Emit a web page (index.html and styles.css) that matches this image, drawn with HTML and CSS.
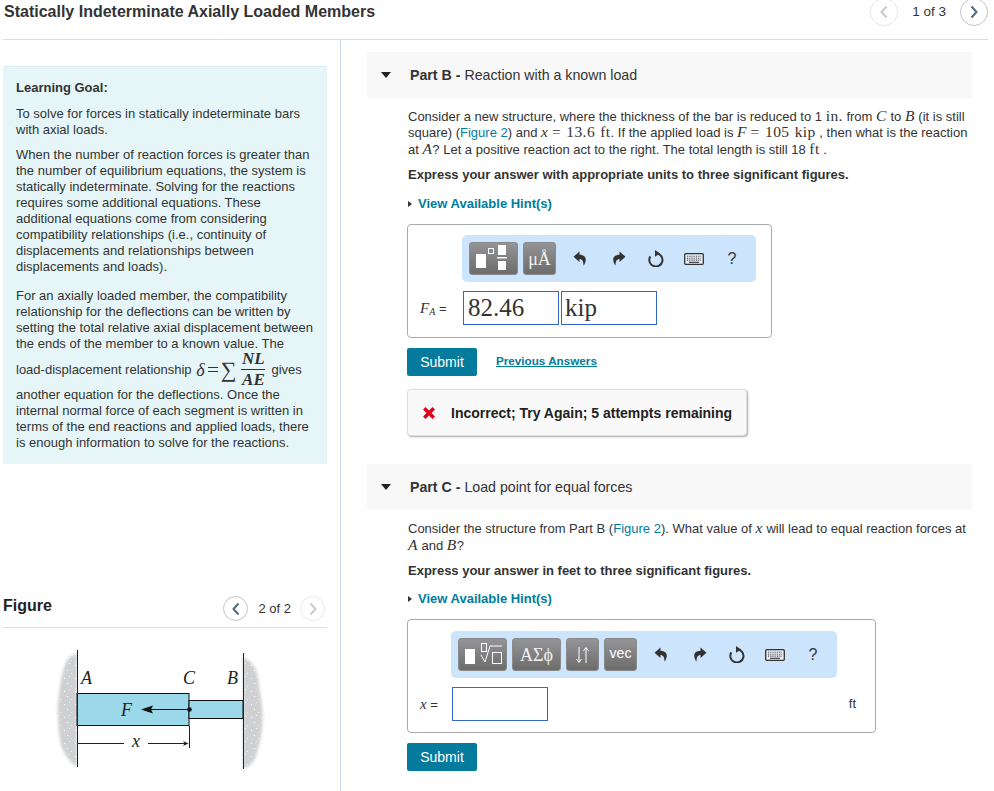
FILE: index.html
```html
<!DOCTYPE html>
<html lang="en">
<head>
<meta charset="utf-8">
<title>Statically Indeterminate Axially Loaded Members</title>
<link rel="stylesheet" href="styles.css">
</head>
<body>
<svg class="defs" width="0" height="0" aria-hidden="true">
  <symbol id="undo" viewBox="0 0 14 15"><path d="M6.500 0.500 L0.500 5.800 L6.500 11 V8 C9 8 10.500 10 10.600 14.800 C13.800 10 14.200 4 6.500 3.800 Z"/></symbol>
  <symbol id="redo" viewBox="0 0 14 15"><path d="M7.500 0.500 L13.500 5.800 L7.500 11 V8 C5 8 3.500 10 3.400 14.800 C0.200 10 -0.200 4 7.500 3.800 Z"/></symbol>
  <symbol id="reset" viewBox="0 0 16 17"><path d="M8 3.300 A6.600 6.600 0 1 1 2.300 6.400" fill="none" stroke="currentColor" stroke-width="2"/><path d="M7 0 L12 3.400 L7 6.800 Z"/></symbol>
  <symbol id="kbd" viewBox="0 0 20 12"><rect x="0.700" y="0.700" width="18.600" height="10.600" rx="1" fill="#e6edf5" stroke="#333" stroke-width="1.300"/><path d="M3 3.300 H17 M3 5.200 H17 M3 7.100 H17" stroke="#555" stroke-width="1.100" stroke-dasharray="1 .8"/><path d="M5 9.300 H15" stroke="#333" stroke-width="1.100"/></symbol>
</svg>

<header class="top">
  <h1 class="title">Statically Indeterminate Axially Loaded Members</h1>
  <nav class="pager">
    <span class="circle off"><svg class="chev" viewBox="0 0 10 14"><path d="M7.500 1.500 L2.500 7 L7.500 12.500"/></svg></span>
    <span class="pager-text">1 of 3</span>
    <span class="circle"><svg class="chev" viewBox="0 0 10 14"><path d="M2.500 1.500 L7.500 7 L2.500 12.500"/></svg></span>
  </nav>
</header>

<div class="columns">
  <aside class="left">
    <section class="goal">
      <p class="goal-title">Learning Goal:</p>
      <p class="g1">To solve for forces in statically indeterminate bars<br>with axial loads.</p>
      <p class="g2">When the number of reaction forces is greater than<br>the number of equilibrium equations, the system is<br>statically indeterminate. Solving for the reactions<br>requires some additional equations. These<br>additional equations come from considering<br>compatibility relationships (i.e., continuity of<br>displacements and relationships between<br>displacements and loads).</p>
      <p class="g3">For an axially loaded member, the compatibility<br>relationship for the deflections can be written by<br>setting the total relative axial displacement between<br>the ends of the member to a known value. The</p>
      <div class="eqline">load-displacement relationship <span class="eq"><i>δ</i><span class="eq-eq">=</span><span class="eq-sum">∑</span></span><span class="frac"><i>NL</i><i class="den">AE</i></span>gives</div>
      <p>another equation for the deflections. Once the<br>internal normal force of each segment is written in<br>terms of the end reactions and applied loads, there<br>is enough information to solve for the reactions.</p>
    </section>
    <div class="fig-head">
      <h2 class="fig-title">Figure</h2>
      <nav class="pager small">
        <span class="circle"><svg class="chev" viewBox="0 0 10 14"><path d="M7.500 1.500 L2.500 7 L7.500 12.500"/></svg></span>
        <span class="pager-text">2 of 2</span>
        <span class="circle off"><svg class="chev" viewBox="0 0 10 14"><path d="M2.500 1.500 L7.500 7 L2.500 12.500"/></svg></span>
      </nav>
    </div>
    <svg class="diagram" width="240" height="130" viewBox="0 0 240 130">
      <defs>
        <filter id="soft" x="-20%" y="-10%" width="140%" height="120%"><feGaussianBlur stdDeviation="1.600"/></filter>
        <pattern id="speck" width="11" height="13" patternUnits="userSpaceOnUse">
          <rect x="2" y="3" width="1" height="1" fill="#fff"/><rect x="7" y="1" width="1" height="1" fill="#f4f4f4"/><rect x="5" y="8" width="1" height="1" fill="#fff"/><rect x="9" y="11" width="1" height="1" fill="#eee"/>
        </pattern>
      </defs>
      <path d="M37 4 C26 8 25 16 23 22 C19 40 17 55 18 70 C19 90 20 106 37 118 Z" fill="#cfd0d2" filter="url(#soft)"/>
      <path d="M37 4 C26 8 25 16 23 22 C19 40 17 55 18 70 C19 90 20 106 37 118 Z" fill="url(#speck)"/>
      <path d="M203 8 C215 14 218 22 219 38 C224 60 224 80 218 100 C216 110 212 117 203 120 Z" fill="#cfd0d2" filter="url(#soft)"/>
      <path d="M203 8 C215 14 218 22 219 38 C224 60 224 80 218 100 C216 110 212 117 203 120 Z" fill="url(#speck)"/>
      <rect x="37" y="44.500" width="112" height="32" fill="#9bd9ea" stroke="#111" stroke-width="1"/>
      <rect x="149" y="51.500" width="54" height="18" fill="#9bd9ea" stroke="#111" stroke-width="1"/>
      <path d="M37.500 1 V118 M203.500 4 V120" stroke="#222" stroke-width="1" fill="none"/>
      <path d="M149 60.500 H108" stroke="#111" stroke-width="1"/>
      <path d="M101 60.500 L113 56.500 L111 60.500 L113 64.500 Z" fill="#111"/>
      <circle cx="149.500" cy="60.500" r="2.300" fill="#111"/>
      <path d="M149.500 77 V99 M38 94.500 H84 M108 94.500 H147" stroke="#222" stroke-width="1" fill="none"/>
      <path d="M148.500 94.500 L143 92 L144.500 94.500 L143 97 Z" fill="#222"/>
      <text class="dlabel" x="41" y="35">A</text>
      <text class="dlabel" x="143" y="35">C</text>
      <text class="dlabel" x="187" y="35">B</text>
      <text class="dlabel" x="81" y="67">F</text>
      <text class="dlabel" x="92" y="98">x</text>
    </svg>
  </aside>

  <main class="right">
    <section class="part">
      <div class="part-bar"><span class="tri"></span><span class="part-name">Part B - </span><span>Reaction with a known load</span></div>
      <div class="part-body">
        <p class="desc">Consider a new structure, where the thickness of the bar is reduced to 1 <span class="m">in.</span> from <i class="m">C</i> to <i class="m">B</i> (it is still<br>square) (<a class="link" href="#">Figure 2</a>) and <i class="m">x</i> <span class="m">= 13.6 ft</span>. If the applied load is <i class="m">F</i> <span class="m">= 105 kip</span> , then what is the reaction<br>at <i class="m">A</i>? Let a positive reaction act to the right. The total length is still 18 <span class="m">ft</span> .</p>
        <p class="express">Express your answer with appropriate units to three significant figures.</p>
        <p class="hint"><span class="hint-tri"></span>View Available Hint(s)</p>
        <div class="answer answer-b">
          <div class="toolbar tb-b">
            <span class="btn w49">
              <svg width="49" height="33" viewBox="0 0 49 33"><rect x="7" y="12" width="10" height="14" fill="#fff"/><rect x="19.500" y="6.500" width="5" height="5" fill="none" stroke="#fff"/><rect x="29" y="3" width="8" height="10" fill="#fff"/><rect x="28" y="15" width="10" height="1.500" fill="#fff"/><rect x="29" y="19" width="8" height="9" fill="#fff"/></svg>
            </span>
            <span class="btn w33 serif">μÅ</span>
            <span class="tools">
              <svg class="ic ic-undo"><use href="#undo"/></svg>
              <svg class="ic ic-redo"><use href="#redo"/></svg>
              <svg class="ic ic-reset"><use href="#reset"/></svg>
              <svg class="ic ic-kbd"><use href="#kbd"/></svg>
              <span class="q">?</span>
            </span>
          </div>
          <div class="row">
            <span class="lab"><i>F<sub>A</sub></i> =</span>
            <span class="field">82.46</span>
            <span class="field second">kip</span>
          </div>
        </div>
        <div class="actions">
          <button class="submit">Submit</button>
          <a class="prev" href="#">Previous Answers</a>
        </div>
        <div class="feedback">
          <svg class="xmark" width="14" height="14" viewBox="0 0 14 14"><path d="M1 3.500 L3.500 1 L7 4.500 L10.500 1 L13 3.500 L9.500 7 L13 10.500 L10.500 13 L7 9.500 L3.500 13 L1 10.500 L4.500 7 Z" fill="#e2001a"/></svg>
          <span>Incorrect; Try Again; 5 attempts remaining</span>
        </div>
      </div>
    </section>

    <section class="part part-c">
      <div class="part-bar"><span class="tri"></span><span class="part-name">Part C - </span><span>Load point for equal forces</span></div>
      <div class="part-body">
        <p class="desc">Consider the structure from Part B (<a class="link" href="#">Figure 2</a>). What value of <i class="m">x</i> will lead to equal reaction forces at<br><i class="m">A</i> and <i class="m">B</i>?</p>
        <p class="express">Express your answer in feet to three significant figures.</p>
        <p class="hint hint-c"><span class="hint-tri"></span>View Available Hint(s)</p>
        <div class="answer answer-c">
          <div class="toolbar tb-c">
            <span class="btn w49">
              <svg width="49" height="33" viewBox="0 0 49 33"><rect x="7" y="11" width="10" height="15" fill="#fff"/><rect x="23.500" y="5.500" width="5" height="8" fill="none" stroke="#fff"/><path d="M23 17 L27 24 L32 8 H44" fill="none" stroke="#fff"/><rect x="34.500" y="14.500" width="9" height="11" fill="none" stroke="#fff"/></svg>
            </span>
            <span class="btn w49 serif">ΑΣϕ</span>
            <span class="btn w33"><svg width="15" height="18" viewBox="0 0 15 18"><path d="M4 1 V16 M1.500 13 L4 16.500 L6.500 13 M11 17 V2 M8.500 5 L11 1.500 L13.500 5" fill="none" stroke="#fff"/></svg></span>
            <span class="btn w33 vec">vec</span>
            <span class="tools">
              <svg class="ic ic-undo"><use href="#undo"/></svg>
              <svg class="ic ic-redo"><use href="#redo"/></svg>
              <svg class="ic ic-reset"><use href="#reset"/></svg>
              <svg class="ic ic-kbd"><use href="#kbd"/></svg>
              <span class="q">?</span>
            </span>
          </div>
          <div class="row">
            <span class="lab lab-x"><i>x</i> =</span>
            <span class="field"></span>
            <span class="unit">ft</span>
          </div>
        </div>
        <div class="actions">
          <button class="submit">Submit</button>
        </div>
      </div>
    </section>
  </main>
</div>
</body>
</html>
```

FILE: styles.css
```css
* { box-sizing: border-box; }
html, body { margin: 0; padding: 0; height: 791px; overflow: hidden; background: #fff; }
body { font-family: "Liberation Sans", Arial, sans-serif; font-size: 13px; line-height: 16px; color: #333; }
p { margin: 0; }
.defs { position: absolute; }

.top { display: flex; align-items: flex-start; justify-content: space-between; height: 40px; margin: 0 6px 0 3px; border-bottom: 1px solid #ddd; }
.title { margin: 3px 0 0 1px; font-size: 16px; line-height: 18px; font-weight: 700; color: #333; }
.pager { display: flex; align-items: center; }
.top .pager { margin-top: -2px; }
.pager-text { margin: 0 14px; color: #333; }
.top .pager-text { font-size: 13.500px; }
.circle { display: flex; align-items: center; justify-content: center; width: 28px; height: 28px; border: 1px solid #c4c4c4; border-radius: 50%; color: #4a6a86; }
.circle.off { border-color: #e8e8e8; color: #c5ccd4; }
.chev { width: 10px; height: 14px; fill: none; stroke: currentColor; stroke-width: 2; }

.columns { display: flex; height: 751px; }
.left { width: 341px; padding: 26px 0 0 3px; border-right: 1px solid #c9dbe8; flex: none; }
.goal { width: 324px; height: 398px; padding: 13px 0 0 13px; background: #e6f6f8; border-top: 1px solid #d8eef2; }
.goal-title { margin-bottom: 10px; font-weight: 700; }
.g1 { margin-bottom: 9px; }
.g2 { margin-bottom: 13px; }
.eqline { display: flex; align-items: center; height: 35px; white-space: pre; }
.eq { display: flex; align-items: center; font-family: "Liberation Serif", serif; font-size: 18px; margin-left: 1px; }
.eq-eq { margin: 0 3px 0 3px; transform: scaleX(1.200); }
.eq-sum { font-size: 22px; }
.frac { display: flex; flex-direction: column; align-items: center; width: 24px; margin: 0 6px 0 5px; font-family: "Liberation Serif", serif; font-weight: 700; font-size: 17px; line-height: 20px; }
.den { width: 100%; text-align: center; border-top: 1px solid #333; }

.fig-head { display: flex; align-items: center; justify-content: space-between; width: 324px; height: 52px; margin-top: 112px; padding: 8px 2px 0 0; border-bottom: 1px solid #ddd; }
.fig-title { margin: 0; font-size: 16px; font-weight: 700; line-height: 18px; color: #222; }
.small { margin-top: 6px; }
.small .pager-text { margin: 0 9px 0 10px; }
.small .circle { width: 25px; height: 25px; }
.diagram { display: block; margin: 21px 0 0 37px; }
.dlabel { font-family: "Liberation Serif", serif; font-style: italic; font-size: 18px; fill: #222; }

.right { width: 631px; padding: 12px 0 0 26px; flex: none; }
.part-bar { display: flex; align-items: center; height: 46px; background: #f8f8f8; font-size: 14.200px; white-space: pre; }
.tri { width: 0; height: 0; margin: 0 19px 0 14px; border-left: 5.500px solid transparent; border-right: 5.500px solid transparent; border-top: 6px solid #222; }
.part-name { font-weight: 700; }
.part-body { padding: 11px 0 0 40px; }
.desc { margin-left: 1px; line-height: 16.400px; white-space: nowrap; }
.express { margin: 9px 0 0 1px; font-weight: 700; }
.hint { display: flex; align-items: center; margin: 13px 0 0 1px; font-weight: 700; color: #007c9e; }
.hint-c { margin-top: 12px; }
.hint-tri { width: 0; height: 0; margin-right: 6px; border-top: 3.500px solid transparent; border-bottom: 3.500px solid transparent; border-left: 4px solid #333; }
.link { color: #007c9e; text-decoration: none; }
.m { font-family: "Liberation Serif", serif; font-size: 15.500px; line-height: 0; letter-spacing: .4px; word-spacing: 1px; }

.answer { margin-top: 12px; border: 1px solid #aaa; border-radius: 4px; }
.answer-b { width: 365px; height: 114px; padding: 10px 0 0 54px; }
.answer-c { width: 469px; height: 114px; padding: 11px 0 0 43px; }
.toolbar { display: flex; align-items: center; height: 47px; padding-left: 7px; gap: 5px; background: #cde4fd; border-radius: 5px; }
.tb-b { width: 294px; }
.tb-c { width: 386px; }
.btn { display: flex; align-items: center; justify-content: center; height: 33px; border: 1px solid #8a8a8a; border-radius: 3px; background: linear-gradient(#949497, #6c6c6c); color: #fff; flex: none; }
.btn svg { display: block; flex: none; }
.w49 { width: 49px; }
.w33 { width: 33px; }
.serif { font-family: "Liberation Serif", serif; font-size: 18px; color: #f2f2f2; }
.vec { font-size: 14px; padding-bottom: 4px; }
.tools { display: flex; align-items: center; flex: 1; height: 33px; padding-left: 12px; }
.ic { display: block; flex: none; fill: #333; color: #333; }
.ic-undo, .ic-redo { width: 14px; height: 15px; }
.ic-undo { margin-right: 24.500px; }
.ic-redo { margin-right: 22.500px; }
.ic-reset { width: 16px; height: 17px; margin-right: 20px; }
.ic-kbd { width: 20px; height: 12px; margin-right: 23.500px; }
.q { font-size: 16px; color: #333; }

.row { display: flex; align-items: center; margin-top: 9px; margin-left: -54px; padding-left: 12px; }
.answer-c .row { margin-left: -43px; }
.lab { width: 43px; font-size: 13px; }
.lab i { font-family: "Liberation Serif", serif; font-size: 15px; }
.lab sub { font-size: 10px; line-height: 0; vertical-align: -2px; }
.lab-x { width: 32px; }
.field { display: flex; align-items: center; width: 96px; height: 34px; padding: 0 0 1px 4px; border: 1px solid #3366cc; font-family: "Liberation Serif", serif; font-size: 25px; color: #333; background: #fff; }
.second { margin-left: 2px; padding-left: 3px; }
.unit { margin-left: auto; margin-right: 19px; }

.actions { display: flex; align-items: center; gap: 19px; margin-top: 10px; }
.submit { width: 70px; height: 28px; padding: 0; border: 0; border-radius: 2px; background: #047a9c; color: #fff; font: 14px "Liberation Sans", Arial, sans-serif; }
.prev { margin-top: -2px; font-size: 11.700px; font-weight: 700; color: #007c9e; text-decoration: underline; }
.feedback { display: flex; align-items: center; gap: 15px; width: 340px; height: 47px; margin-top: 13px; padding-left: 14px; background: #f9f9f9; border: 1px solid #ddd; border-radius: 4px; box-shadow: 1px 1px 2px #aaa; font-weight: 700; color: #222; font-size: 14px; }
.xmark { flex: none; }
.part-c { margin-top: 28px; }
```
